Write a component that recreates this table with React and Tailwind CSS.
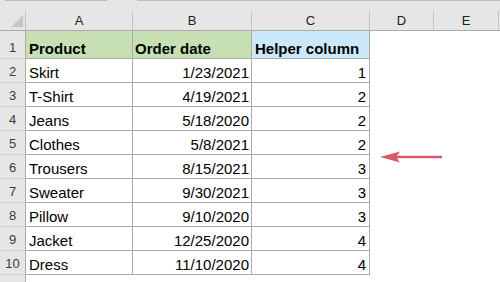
import React from "react";

const rows = [
  ["Skirt", "1/23/2021", "1"],
  ["T-Shirt", "4/19/2021", "2"],
  ["Jeans", "5/18/2020", "2"],
  ["Clothes", "5/8/2021", "2"],
  ["Trousers", "8/15/2021", "3"],
  ["Sweater", "9/30/2021", "3"],
  ["Pillow", "9/10/2020", "3"],
  ["Jacket", "12/25/2020", "4"],
  ["Dress", "11/10/2020", "4"],
];

const font = { fontFamily: '"Liberation Sans", Arial, sans-serif' };

function RowHead({ n, h }) {
  return (
    <div
      className={`w-[26px] shrink-0 ${h} flex items-end justify-center bg-[#e6e6e6] border-r border-b border-r-[#ababab] border-b-[#d0d0d0] text-[13px] leading-[17px] pb-[2px] text-[#3c3c3c]`}
    >
      {n}
    </div>
  );
}

export default function App() {
  return (
    <div className="w-[500px] h-[282px] overflow-hidden bg-white relative" style={font}>
      {/* top strip */}
      <div className="h-[11px] bg-[#e6e6e6] flex">
        <div className="w-[5px] h-px" />
        <div className="w-[102px] h-px bg-[#bdbdbd]" />
        <div className="w-[30px] h-px" />
        <div className="flex-1 h-px bg-[#bdbdbd]" />
      </div>
      {/* column header */}
      <div className="flex h-[20px] bg-[#e6e6e6] border-b border-[#ababab] text-[13px] text-[#222]">
        <div className="w-[26px] shrink-0 border-r border-[#c4c4c4] relative">
          <svg className="absolute left-[11px] top-[4px]" width="12" height="12" viewBox="0 0 12 12">
            <polygon points="0,12 12,12 12,0" fill="#c6c6c6" />
          </svg>
        </div>
        <div className="w-[107px] shrink-0 border-r border-[#c4c4c4] flex items-center justify-center">A</div>
        <div className="w-[119px] shrink-0 border-r border-[#c4c4c4] flex items-center justify-center">B</div>
        <div className="w-[118px] shrink-0 border-r border-[#c4c4c4] flex items-center justify-center">C</div>
        <div className="w-[64px] shrink-0 border-r border-[#c4c4c4] flex items-center justify-center">D</div>
        <div className="w-[65px] shrink-0 border-r border-[#c4c4c4] flex items-center justify-center">E</div>
        <div className="flex-1" />
      </div>
      {/* row 1 */}
      <div className="flex h-[28px] text-[15px] leading-[17px] text-black font-bold">
        <RowHead n="1" h="h-[28px] font-normal" />
        <div className="w-[107px] shrink-0 h-[28px] bg-[#c6e0b4] border-r border-b border-[#ababab] flex items-end pl-[3px] pb-px">
          Product
        </div>
        <div className="w-[119px] shrink-0 h-[28px] bg-[#c6e0b4] border-r border-b border-[#ababab] flex items-end pl-[2px] pb-px">
          Order date
        </div>
        <div className="w-[118px] shrink-0 h-[28px] bg-[#cce8fb] border-r border-b border-[#ababab] flex items-end pl-[3px] pb-px">
          Helper column
        </div>
        <div className="flex-1" />
      </div>
      {rows.map((r, i) => (
        <div key={i} className="flex h-[24px] text-[15px] leading-[17px] text-black">
          <RowHead n={String(i + 2)} h="h-[24px]" />
          <div className="w-[107px] shrink-0 h-[24px] border-r border-b border-[#ababab] flex items-end pl-[3px] pb-px">
            {r[0]}
          </div>
          <div className="w-[119px] shrink-0 h-[24px] border-r border-b border-[#ababab] flex items-end justify-end pr-[2px] pb-px">
            {r[1]}
          </div>
          <div className="w-[118px] shrink-0 h-[24px] border-r border-b border-[#ababab] flex items-end justify-end pr-[3px] pb-px">
            {r[2]}
          </div>
          <div className="flex-1" />
        </div>
      ))}
      {/* row 11 partial */}
      <div className="flex h-[24px] text-[15px] leading-[17px]">
        <RowHead n="11" h="h-[24px]" />
        <div className="flex-1" />
      </div>
      {/* arrow */}
      <svg className="absolute left-[378px] top-[150px]" width="66" height="14" viewBox="0 0 66 14">
        <line x1="14" y1="7" x2="64" y2="7" stroke="#d7596b" strokeWidth="2.5" />
        <polygon points="2,7 22,1.5 18,7 22,12.5" fill="#d7596b" />
      </svg>
    </div>
  );
}
